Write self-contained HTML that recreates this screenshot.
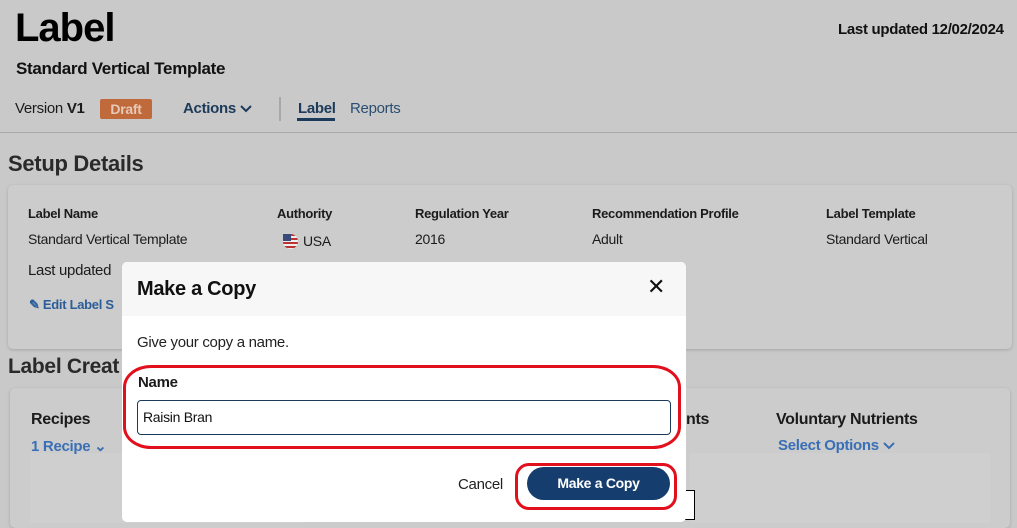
<!DOCTYPE html>
<html><head><style>
*{margin:0;padding:0;box-sizing:border-box}
body{width:1017px;height:515px;overflow:hidden;background:#c9c9c9;font-family:"Liberation Sans",sans-serif;color:#1b1b1b;position:relative;letter-spacing:-0.3px}
.a{position:absolute;white-space:nowrap}
.b{font-weight:bold}
.card{position:absolute;background:#cccccc;border-radius:5px;box-shadow:0 1px 3px rgba(0,0,0,.18)}
.blue{color:#2a5d99}
</style></head><body>
<div class="a b" style="left:15px;top:6px;font-size:40px;color:#000;letter-spacing:-1px">Label</div>
<div class="a" style="left:16px;top:59px;font-size:17px;font-weight:600;color:#111">Standard Vertical Template</div>
<div class="a b" style="left:838px;top:21px;font-size:15px;color:#111">Last updated 12/02/2024</div>
<div class="a" style="left:15px;top:100px;font-size:15px">Version <b>V1</b></div>
<div class="a b" style="left:100px;top:99px;width:52px;height:20px;background:#c0693a;color:#e6c9b6;font-size:14px;text-align:center;line-height:20px;border-radius:2px">Draft</div>
<div class="a" style="left:183px;top:100px;font-size:15px;color:#1c3a5a;font-weight:600">Actions <svg width="12" height="8" viewBox="0 0 12 8"><path d="M1 1l5 5 5-5" stroke="#1c3a5a" stroke-width="2" fill="none"/></svg></div>
<div class="a" style="left:279px;top:97px;width:2px;height:24px;background:#a8a8a8"></div>
<div class="a" style="left:298px;top:100px;font-size:15px;color:#1c3a5a;font-weight:600">Label</div>
<div class="a" style="left:297px;top:118px;width:38px;height:3px;background:#1c3a5a"></div>
<div class="a" style="left:350px;top:100px;font-size:15px;color:#2b4e72">Reports</div>
<div class="a" style="left:0;top:132px;width:1017px;height:1px;background:#a9a9a9"></div>
<div class="a b" style="left:8px;top:151px;font-size:22px;color:#2a2a2a">Setup Details</div>
<div class="card" style="left:8px;top:185px;width:1004px;height:164px"></div>
<div class="a b" style="left:28px;top:206px;font-size:13px">Label Name</div>
<div class="a" style="left:28px;top:231px;font-size:14px">Standard Vertical Template</div>
<div class="a b" style="left:277px;top:206px;font-size:13px">Authority</div>
<div class="a" style="left:283px;top:234px;width:15px;height:15px;border-radius:50%;background:repeating-linear-gradient(#b33 0 2px,#eee 2px 4px)"><div style="width:8px;height:7px;background:#3c4a7a"></div></div>
<div class="a" style="left:303px;top:233px;font-size:14px">USA</div>
<div class="a b" style="left:415px;top:206px;font-size:13px">Regulation Year</div>
<div class="a" style="left:415px;top:231px;font-size:14px">2016</div>
<div class="a b" style="left:592px;top:206px;font-size:13px">Recommendation Profile</div>
<div class="a" style="left:592px;top:231px;font-size:14px">Adult</div>
<div class="a b" style="left:826px;top:206px;font-size:13px">Label Template</div>
<div class="a" style="left:826px;top:231px;font-size:14px">Standard Vertical</div>
<div class="a" style="left:28px;top:262px;font-size:15px">Last updated</div>
<div class="a b blue" style="left:29px;top:297px;font-size:13px">&#9998; Edit Label S</div>
<div class="a b" style="left:8px;top:355px;font-size:21px;color:#2a2a2a">Label Creat</div>
<div class="card" style="left:10px;top:388px;width:1000px;height:140px"></div>
<div class="a" style="left:30px;top:453px;width:280px;height:70px;background:#cfcfcf"></div>
<div class="a" style="left:690px;top:453px;width:300px;height:70px;background:#cfcfcf"></div>
<div class="a b" style="left:31px;top:411px;font-size:16px">Recipes</div>
<div class="a b blue" style="left:31px;top:437px;font-size:15px;color:#3a6fb5">1 Recipe &#8964;</div>
<div class="a b" style="left:686px;top:411px;font-size:16px">nts</div>
<div class="a b" style="left:776px;top:411px;font-size:16px">Voluntary Nutrients</div>
<div class="a b" style="left:778px;top:437px;font-size:15px;color:#3a6fb5">Select Options <svg width="12" height="8" viewBox="0 0 12 8"><path d="M1 1l5 5 5-5" stroke="#3a6fb5" stroke-width="2" fill="none"/></svg></div>
<div class="a" style="left:670px;top:490px;width:25px;height:30px;border:1px solid #000;background:#fff"></div>
<!-- modal -->
<div class="a" style="left:122px;top:262px;width:564px;height:260px;background:#fff;border-radius:5px;overflow:hidden">
<div style="height:54px;background:#f7f7f7;position:relative">
<div class="a b" style="left:15px;top:16px;font-size:20px;color:#111">Make a Copy</div>
<div class="a" style="left:525px;top:12px;font-size:22px;color:#111">&#10005;</div>
</div>
<div class="a" style="left:15px;top:72px;font-size:15px;color:#222">Give your copy a name.</div>
<div class="a b" style="left:16px;top:112px;font-size:15px">Name</div>
<div class="a" style="left:15px;top:138px;width:534px;height:35px;border:1px solid #1c3a5a;border-radius:4px;font-size:14px;padding:8px 5px;color:#111">Raisin Bran</div>
<div class="a" style="left:336px;top:214px;font-size:15px;color:#222">Cancel</div>
<div class="a b" style="left:405px;top:205px;width:143px;height:33px;border-radius:17px;background:#153e6e;color:#fff;font-size:14px;text-align:center;line-height:33px">Make a Copy</div>
</div>
<div class="a" style="left:123px;top:365px;width:558px;height:84px;border:3px solid #e2101c;border-radius:28px/22px"></div>
<div class="a" style="left:515px;top:463px;width:162px;height:47px;border:3px solid #e2101c;border-radius:14px"></div>
</body></html>
